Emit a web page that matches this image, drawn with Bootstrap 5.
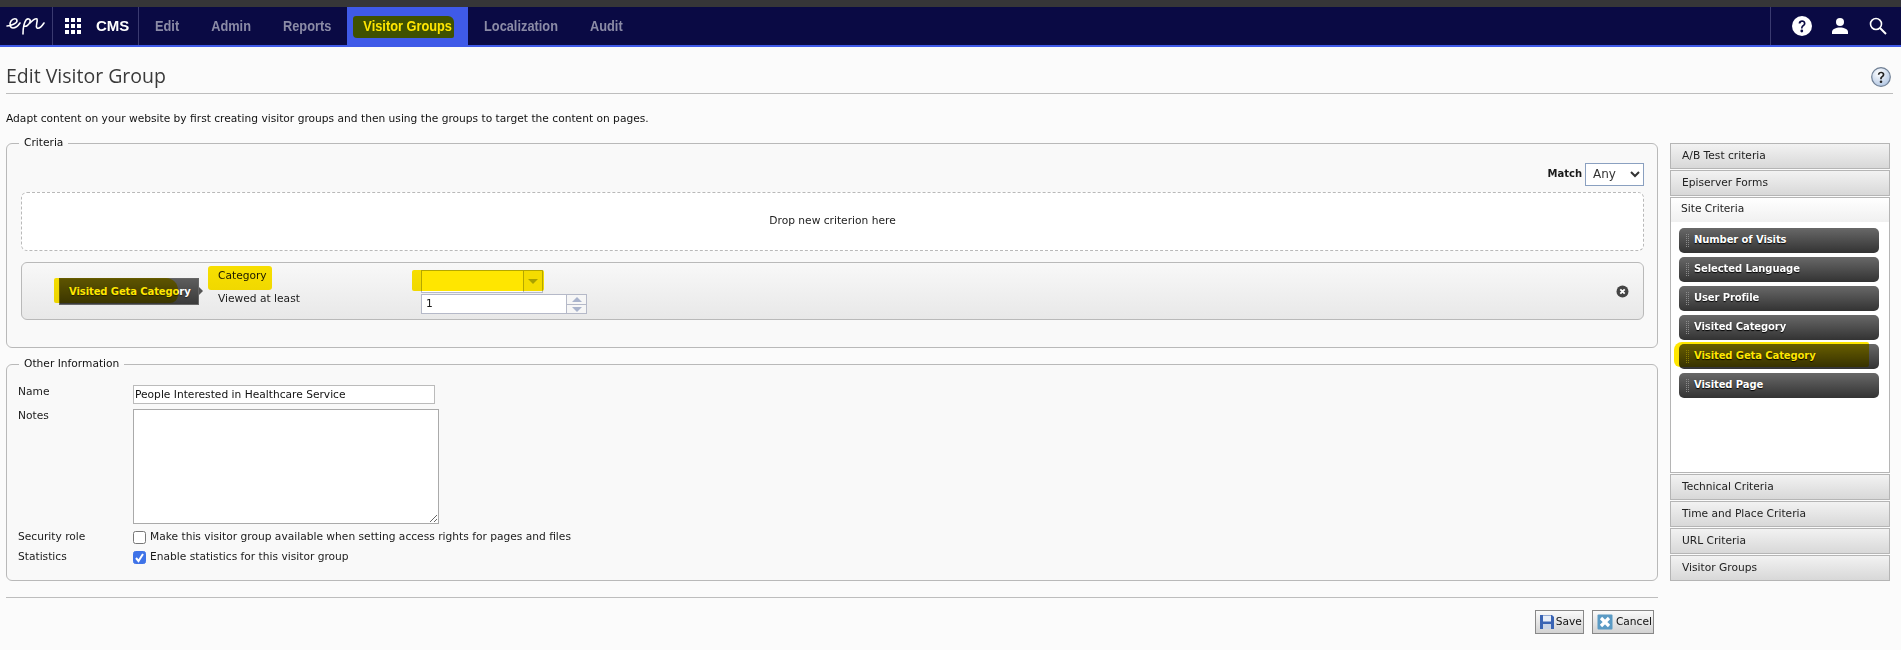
<!DOCTYPE html>
<html lang="en"><head><meta charset="utf-8"><title>Edit Visitor Group</title>
<link href="https://cdn.jsdelivr.net/npm/bootstrap@5.3.0/dist/css/bootstrap.min.css" rel="stylesheet">
<style>
html,body{height:650px;overflow:hidden}
body{background:#fbfbfb;color:#1a1a1a;font:10.67px/1.2 "DejaVu Sans",sans-serif}
.topstrip{height:7px;background:#363638}
.appbar{height:40px;background:#0a0a44;border-bottom:2px solid #3f5ae8;color:#fff;font:700 12.8px/38px "Liberation Sans",sans-serif}
.logo-cell{width:53px;height:38px;border-right:1px solid #3a3a70}
.cms-cell{width:86px;height:38px;border-right:1px solid #3a3a70;padding-left:12px;gap:15px;font-size:15px}
.dots{display:grid;grid-template-columns:repeat(3,4px);gap:2px}
.dots i{width:4px;height:4px;background:#fff;display:block}
.tabitem{padding:0 16px;color:#8b8ba6;position:relative;height:38px}
.tabitem b{display:inline-block;font-weight:700;transform:scaleY(1.2)}
.tabitem.on{background:#3f5ae8;color:#fff}
.appright{width:131px;height:38px;border-left:1px solid #3a3a70;margin-left:auto;padding-left:21px}
.hl{position:absolute;background:#ffe600;mix-blend-mode:multiply;pointer-events:none}
.pagewrap{padding:0 8px 0 6px}
.ttl{height:47px;padding-top:12px;border-bottom:1px solid #bdbdbd;font:400 19.5px/34px "Open Sans",sans-serif;color:#3a3a3a}
.ttl svg{margin:2px 2px 0 0}
.intro{margin:17px 0 0;height:16px;line-height:16px;color:#111}
.leftcol{width:1652px}
.sidecol{width:220px;margin-left:12px;margin-top:16px}
.fset{border:1px solid #b9b9b9;border-radius:6px;background:#f9f9f9;padding:0;margin:0;min-width:0;position:relative}
.fset legend{float:none;width:auto;font:inherit;line-height:14px;margin:0 0 0 12px;padding:0 5px;color:#111}
.critset{height:212px;margin-top:9px}
.infoset{height:224px;margin-top:9px}
.matchrow{height:24px;padding-right:13px;margin-top:12px}
.matchrow b{margin-right:3px;font-size:10px}
.matchsel{width:59px;height:23px;border:1px solid #8aa0c0;background:#fff;padding:0 3px;color:#333;font-size:12px}
.dropzone{height:59px;margin:6px 13px 0 14px;border:1px dashed #b9b9b9;border-radius:6px;background:#fff;color:#222}
.critrow{height:58px;margin:11px 13px 0 14px;border:1px solid #b9b9b9;border-radius:6px;background:linear-gradient(#f8f8f8,#e8e8e8);position:relative}
.critlabel{margin:15px 0 0 37px;width:140px;height:27px;background:linear-gradient(#5d5d5d,#3a3a3a);border:1px solid #666;color:#fff;font-weight:700;font-size:10px;letter-spacing:-.1px;line-height:25px;padding-left:9px;position:relative;flex:none;text-shadow:0 1px 1px #222}
.critlabel::after{content:"";position:absolute;right:-5px;top:8px;border-left:4px solid #555;border-top:4px solid transparent;border-bottom:4px solid transparent}
.critlabels{width:203px;margin-left:19px}
.critlabels div:first-child{margin-top:7px}
.critlabels div+div{margin-top:10px}
.critinputs{margin-top:7px}
.catsel{width:122px;height:23px;border:1px solid #b5b9c8;background:#fff}
.catsel span{width:19px;height:21px;border-left:1px solid #b5b9c8;margin-left:auto;background:#f4f4f4}
.tri{width:0;height:0;border-left:5px solid transparent;border-right:5px solid transparent;border-top:5px solid #a9b3cc}
.tri.up{border-top:0;border-bottom:5px solid #a9b3cc}
.spin{width:166px;height:20px;border:1px solid #b5b9c8;background:#fff;padding-left:4px;line-height:18px;margin-top:1px}
.spin .btns{width:20px;height:18px;border-left:1px solid #b5b9c8;margin-left:auto;background:#f6f6f6}
.spin .btns span{height:9px}
.spin .btns span+span{border-top:1px solid #b5b9c8}
.xbtn{margin:0 14px 0 auto;flex:none}
.inforow{padding-left:11px}
.inforow .lbl{width:115px;flex:none}
.lbl.nudge{padding-top:1px}
.firstrow{margin-top:14px}
.rowgap{margin-top:5px}
.rowgap2{margin-top:7px}
.nameinp{width:302px;height:19px;border:1px solid #bbb;background:#fff;padding:0 1px;font:inherit;color:#111;display:block}
.noteinp{width:306px;height:115px;border:1px solid #aaa;background:#fff;display:block;padding:2px;margin:0}
.cb{width:13px;height:13px;border:1px solid #777;border-radius:2.5px;background:#fff;margin:0;appearance:none;flex:none;display:block}
.cb.chk{background:#3f73e8;border-color:#3f73e8}
.cbwrap{position:relative;width:13px;height:13px;margin-right:4px}
.cbwrap svg{position:absolute;left:0;top:0}
.btmline{border-top:1px solid #bdbdbd;margin-top:16px;height:13px}
.actbtn{height:24px;border:1px solid #888;background:linear-gradient(#fafafa,#d2d2d2);padding:0 1px 0 4px;font:inherit;color:#111;gap:3px;border-radius:0}
.actbtn.savebtn{gap:1px;padding-left:3px}
.btnrow{padding-right:4px}
.acchead{height:26px;border:1px solid #b5b5b5;background:linear-gradient(#f2f2f2,#d8d8d8);padding-left:11px;line-height:24px;margin-bottom:1px;color:#222}
.acchead.open{background:linear-gradient(#fff,#f0f0f0);border:0;height:24px;line-height:22px;margin:0;padding-left:10px}
.accpanel{height:276px;border:1px solid #b5b5b5;background:#fff;margin-bottom:1px}
.paltile{height:25px;margin:0 10px 4px 8px;border-radius:5px;background:linear-gradient(#686868,#333);color:#fff;font-weight:700;font-size:10px;letter-spacing:-.1px;line-height:24px;text-shadow:0 1px 1px #000;position:relative;padding-left:15px}
.paltile::before{content:"";position:absolute;left:6px;top:6px;width:5px;height:13px;background:conic-gradient(#8a8a8a 25%,transparent 0) 0 0/2px 2px}
.palstack{padding-top:6px}
.tophl{left:6px;top:9px;width:101px;height:22px;border-radius:3px 6px 2px 4px}
.hl1{left:32px;top:15px;width:124px;height:25px;border-radius:2px 12px 8px 2px}
.hl2{left:186px;top:3px;width:64px;height:24px;border-radius:3px}
.hl3{left:390px;top:7px;width:132px;height:21px;border-radius:2px}
.hl4{left:-5px;top:-2px;width:195px;height:25px;border-radius:8px 2px 2px 6px}
.ic-user{margin-left:19px}
.ic-search{margin-left:20px}
</style></head><body>
<div class="topstrip"></div>
<nav class="appbar d-flex align-items-center">
  <div class="logo-cell d-flex align-items-center justify-content-center">
    <svg width="42" height="24" viewBox="0 0 42 24" fill="none" stroke="#fff" stroke-width="1.600" stroke-linecap="round" stroke-linejoin="round"><path d="M2 12C6 12 12 9 12 7 12 4 8 4 6 7 4 10 5 14 8 14 10 14 13 12 15 9"/><path d="M18 20C18 14 19 9 21 6 23 4 26 5 25 8 24 11 21 13 19 12"/><path d="M25 9C27 7 30 4 32 5 33 8 30 12 32 14 34 15 37 12 39 9"/></svg>
  </div>
  <div class="cms-cell d-flex align-items-center">
    <div class="dots"><i></i><i></i><i></i><i></i><i></i><i></i><i></i><i></i><i></i></div><span>CMS</span>
  </div>
  <div class="tabitem"><b>Edit</b></div><div class="tabitem"><b>Admin</b></div><div class="tabitem"><b>Reports</b></div>
  <div class="tabitem on"><b>Visitor Groups</b><span class="hl tophl"></span></div>
  <div class="tabitem"><b>Localization</b></div><div class="tabitem"><b>Audit</b></div>
  <div class="appright d-flex align-items-center">
    <svg width="20" height="20" viewBox="0 0 20 20"><circle cx="10" cy="10" r="10" fill="#fff"/><path d="M6.600 7.600c0-4.300 6.900-4.300 6.900-.2 0 2.600-2.900 2.600-2.900 5H9c0-3.400 2.800-3.300 2.800-5 0-1.900-3.300-1.900-3.300.2z" fill="#0a0a44"/><circle cx="9.800" cy="15" r="1.400" fill="#0a0a44"/></svg>
    <svg class="ic-user" width="18" height="18" viewBox="0 0 18 18" fill="#fff"><circle cx="9" cy="5" r="4"/><path d="M1 17v-2c0-3 4-4.500 8-4.500s8 1.500 8 4.500v2z"/></svg>
    <svg class="ic-search" width="18" height="18" viewBox="0 0 18 18" fill="none" stroke="#fff"><circle cx="7" cy="7" r="5.500" stroke-width="1.600"/><path d="M11 11l6 6" stroke-width="2"/></svg>
  </div>
</nav>
<div class="pagewrap">
  <div class="ttl d-flex justify-content-between align-items-center">
    <span>Edit Visitor Group</span>
    <svg width="20" height="20" viewBox="0 0 20 20"><defs><radialGradient id="g1" cx=".4" cy=".3" r=".8"><stop offset="0" stop-color="#fff"/><stop offset="1" stop-color="#a9c0e0"/></radialGradient></defs><circle cx="10" cy="10" r="9.300" fill="url(#g1)" stroke="#6f7f94" stroke-width="1.200"/><path d="M6.800 7.800c0-4 6.600-4 6.600-.2 0 2.400-2.600 2.400-2.600 4.600H9.100c0-3 2.600-2.900 2.600-4.600 0-1.700-3.200-1.700-3.200.2z" fill="#222"/><circle cx="10" cy="14.800" r="1.300" fill="#222"/></svg>
  </div>
  <p class="intro">Adapt content on your website by first creating visitor groups and then using the groups to target the content on pages.</p>
  <div class="d-flex align-items-start">
    <div class="leftcol">
      <fieldset class="fset critset">
        <legend>Criteria</legend>
        <div class="matchrow d-flex justify-content-end align-items-center">
          <b>Match</b>
          <select class="matchsel"><option>Any</option></select>
        </div>
        <div class="dropzone d-flex align-items-center justify-content-center">Drop new criterion here</div>
        <div class="critrow d-flex">
          <div class="critlabel">Visited Geta Category</div>
          <div class="critlabels"><div>Category</div><div>Viewed at least</div></div>
          <div class="critinputs">
            <div class="catsel d-flex"><span class="d-flex align-items-center justify-content-center"><i class="tri"></i></span></div>
            <div class="spin d-flex">1<div class="btns"><span class="d-flex align-items-center justify-content-center"><i class="tri up"></i></span><span class="d-flex align-items-center justify-content-center"><i class="tri"></i></span></div></div>
          </div>
          <svg class="xbtn align-self-center" width="13" height="13" viewBox="0 0 13 13"><circle cx="6.500" cy="6.500" r="6" fill="#444"/><path d="M4.300 4.300l4.400 4.400M8.700 4.300l-4.400 4.400" stroke="#fff" stroke-width="1.800"/></svg>
          <span class="hl hl1"></span>
          <span class="hl hl2"></span>
          <span class="hl hl3"></span>
        </div>
      </fieldset>
      <fieldset class="fset infoset">
        <legend>Other Information</legend>
        <div class="inforow firstrow d-flex align-items-start"><div class="lbl nudge">Name</div><input class="nameinp" value="People Interested in Healthcare Service"></div>
        <div class="inforow rowgap d-flex align-items-start"><div class="lbl nudge">Notes</div><textarea class="noteinp"></textarea></div>
        <div class="inforow rowgap2 d-flex align-items-center"><div class="lbl">Security role</div><span class="cbwrap"><input type="checkbox" class="cb"></span><span>Make this visitor group available when setting access rights for pages and files</span></div>
        <div class="inforow rowgap2 d-flex align-items-center"><div class="lbl">Statistics</div><span class="cbwrap"><input type="checkbox" class="cb chk" checked><svg width="13" height="13" viewBox="0 0 13 13" fill="none" stroke="#fff" stroke-width="2"><path d="M3 7l2.500 3L10 3"/></svg></span><span>Enable statistics for this visitor group</span></div>
      </fieldset>
      <div class="btmline"></div>
      <div class="btnrow d-flex justify-content-end gap-2">
        <button class="actbtn savebtn d-flex align-items-center"><svg width="16" height="16" viewBox="0 0 16 16"><path d="M1 1h12l2 2v12H1z" fill="#3a64b4"/><rect x="4" y="1.500" width="8" height="6" fill="#e8eef8"/><rect x="4" y="10" width="8" height="5" fill="#c9d4e6"/></svg>Save</button>
        <button class="actbtn d-flex align-items-center"><svg width="16" height="16" viewBox="0 0 16 16"><rect x=".5" y=".5" width="15" height="15" rx="1" fill="#5a9ac4"/><path d="M4 4l8 8M12 4l-8 8" stroke="#fff" stroke-width="3.200"/></svg>Cancel</button>
      </div>
    </div>
    <aside class="sidecol">
      <div class="acchead">A/B Test criteria</div>
      <div class="acchead">Episerver Forms</div>
      <div class="accpanel">
        <div class="acchead open">Site Criteria</div>
        <div class="palstack">
          <div class="paltile">Number of Visits</div>
          <div class="paltile">Selected Language</div>
          <div class="paltile">User Profile</div>
          <div class="paltile">Visited Category</div>
          <div class="paltile">Visited Geta Category<span class="hl hl4"></span></div>
          <div class="paltile">Visited Page</div>
        </div>
      </div>
      <div class="acchead">Technical Criteria</div>
      <div class="acchead">Time and Place Criteria</div>
      <div class="acchead">URL Criteria</div>
      <div class="acchead">Visitor Groups</div>
    </aside>
  </div>
</div>
</body></html>
